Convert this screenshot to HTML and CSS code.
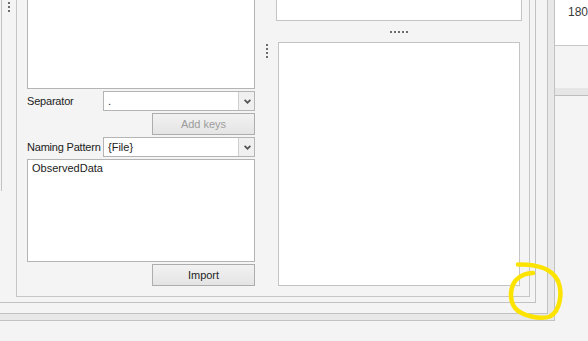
FILE: index.html
```html
<!DOCTYPE html>
<html lang="en">
<head>
  <meta charset="UTF-8">
  <title>Import Observed Data</title>
  <link rel="stylesheet" href="styles.css">
</head>
<body>
  <div class="screen">
    <div class="workspace">
      <div class="frame-outer">
        <div class="frame-mid">
          <div class="frame-inner">
            <div class="left-strip">
              <div class="strip-edge">
                <div class="grip grip-v"><span></span><span></span><span></span></div>
              </div>
            </div>
            <div class="group">
              <div class="import-col">
                <div class="keys-box"></div>
                <div class="field-row">
                  <label>Separator</label>
                  <div class="combo">
                    <span class="combo-text">.</span>
                    <span class="combo-btn">
                      <svg width="7" height="5" viewBox="0 0 7 5"><polyline points="0.6,0.8 3.5,3.7 6.4,0.8" fill="none" stroke="#555" stroke-width="1.7"/></svg>
                    </span>
                  </div>
                </div>
                <button class="btn" disabled>Add keys</button>
                <div class="field-row">
                  <label>Naming Pattern</label>
                  <div class="combo">
                    <span class="combo-text">{File}</span>
                    <span class="combo-btn">
                      <svg width="7" height="5" viewBox="0 0 7 5"><polyline points="0.6,0.8 3.5,3.7 6.4,0.8" fill="none" stroke="#555" stroke-width="1.7"/></svg>
                    </span>
                  </div>
                </div>
                <div class="names-box">ObservedData</div>
                <button class="btn">Import</button>
              </div>
              <div class="preview-col">
                <div class="preview-top"></div>
                <div class="grip-h-row">
                  <div class="grip grip-h"><span></span><span></span><span></span><span></span><span></span></div>
                </div>
                <div class="preview-row">
                  <div class="grip grip-v"><span></span><span></span><span></span><span></span></div>
                  <div class="preview-main"></div>
                </div>
              </div>
            </div>
          </div>
        </div>
      </div>
    </div>
    <div class="side">
      <div class="side-top">180</div>
      <div class="side-gap"></div>
      <div class="side-band"></div>
    </div>
    <!-- yellow marker drawn on the screenshot -->
    <svg class="mark" width="588" height="341" viewBox="0 0 588 341">
      <path d="M518,264.5 C535,264 552,268 558,281 C563,293 560,311 550,316.5 C540,320 522,316 515,308 C509,300 510,287 516,280 C521,275 527,273 533,273" fill="none" stroke="#fce300" stroke-width="4.5" stroke-linecap="round" stroke-linejoin="round"/>
    </svg>
  </div>
</body>
</html>
```

FILE: styles.css
```css
* {
  margin: 0;
  padding: 0;
  box-sizing: border-box;
}
body {
  background: #f4f4f4;
  font-family: 'Liberation Sans', Arial, sans-serif;
  font-size: 11px;
  color: #222;
  overflow: hidden;
}
.screen {
  position: relative;
  width: 588px;
  height: 341px;
  display: flex;
  overflow: hidden;
}
.workspace {
  width: 555px;
  height: 321px;
  flex-shrink: 0;
}
/* nested frames, right/bottom edges only visible */
.frame-outer {
  height: 321px;
  background: #e8e8e8;
  border-right: 1px solid #c2c2c2;
  border-bottom: 1px solid #c2c2c2;
  padding: 0 6px 6px 0;
}
.frame-mid {
  width: 548px;
  height: 314px;
  background: #f4f4f4;
  border-right: 1px solid #c2c2c2;
  border-bottom: 1px solid #c2c2c2;
  padding: 0 11px 10px 0;
}
.frame-inner {
  width: 536px;
  height: 303px;
  border-right: 1px solid #c2c2c2;
  border-bottom: 1px solid #c2c2c2;
  padding: 0 5px 5px 0;
  display: flex;
}
.left-strip {
  width: 16px;
  flex-shrink: 0;
  padding-left: 1px;
}
.strip-edge {
  height: 191px;
  border-left: 1px solid #c2c2c2;
  padding: 2px 0 0 6px;
}
.grip {
  display: flex;
  gap: 2px;
}
.grip span {
  width: 2px;
  height: 2px;
  background: #6e6e6e;
}
.grip-v {
  flex-direction: column;
}
.group {
  width: 514px;
  height: 297px;
  border: 1px solid #c6c6c6;
  border-top: none;
  padding: 0 7px 10px 10px;
  display: flex;
}
.import-col {
  width: 228px;
  flex-shrink: 0;
  display: flex;
  flex-direction: column;
  gap: 2px;
}
.keys-box {
  height: 101px;
  margin-top: -12px;
  background: #fff;
  border: 1px solid #b4b4b4;
}
.field-row {
  height: 20px;
  display: flex;
  align-items: center;
}
.field-row label {
  width: 76px;
  flex-shrink: 0;
  line-height: 13px;
  white-space: nowrap;
  letter-spacing: -0.2px;
}
.combo {
  width: 152px;
  height: 20px;
  display: flex;
  background: #fff;
  border: 1px solid #b4b4b4;
}
.combo-text {
  flex: 1;
  padding-left: 4px;
  line-height: 18px;
}
.combo-btn {
  width: 16px;
  border-left: 1px solid #cfcfcf;
  background: #f0f0f0;
  display: flex;
  align-items: center;
  justify-content: center;
  padding-left: 1px;
}
.btn {
  align-self: flex-end;
  width: 103px;
  height: 22px;
  border: 1px solid #adadad;
  background: linear-gradient(#f2f2f2, #e4e4e4);
  font-family: inherit;
  font-size: 11px;
  color: #1e1e1e;
}
.btn:disabled {
  color: #9c9c9c;
}
.names-box {
  height: 103px;
  background: #fff;
  border: 1px solid #b4b4b4;
  padding: 2px 4px;
  line-height: 13px;
}
.preview-col {
  flex: 1;
  margin-left: 9px;
  display: flex;
  flex-direction: column;
}
.preview-top {
  height: 33px;
  margin: -12px 0 0 12px;
  background: #fff;
  border: 1px solid #c4c4c4;
}
.grip-h-row {
  height: 21px;
  padding: 10px 0 0 12px;
  display: flex;
  justify-content: center;
}
.preview-row {
  height: 244px;
  display: flex;
}
.preview-row .grip-v {
  margin-left: 2px;
  padding-top: 2px;
}
.preview-main {
  width: 242px;
  margin-left: 10px;
  background: #fff;
  border: 1px solid #c4c4c4;
}
.side {
  flex: 1;
  display: flex;
  flex-direction: column;
}
.side-top {
  height: 46px;
  background: #fff;
  border-bottom: 1px solid #c8c8c8;
  padding: 5px 0 0 13px;
  font-size: 12px;
  line-height: 14px;
  color: #3a3a3a;
  white-space: nowrap;
}
.side-gap {
  height: 42px;
}
.side-band {
  height: 8px;
  background: #e6e6e6;
  border-bottom: 1px solid #bdbdbd;
}
.mark {
  position: absolute;
  left: 0;
  top: 0;
  pointer-events: none;
}
```
